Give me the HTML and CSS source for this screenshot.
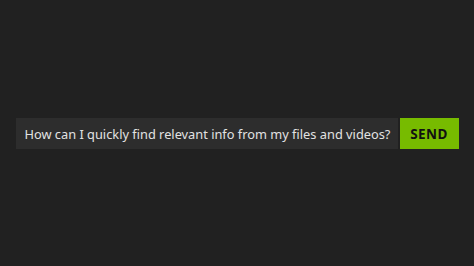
FILE: index.html
```html
<!DOCTYPE html>
<html lang="en">
<head>
<meta charset="utf-8">
<link rel="stylesheet" href="styles.css">
</head>
<body>
<div class="page">
  <form class="chat">
    <div class="field">How can I quickly find relevant info from my files and videos?</div>
    <button class="send" type="button">SEND</button>
  </form>
</div>
</body>
</html>
```

FILE: styles.css
```css
html, body {
  margin: 0;
  padding: 0;
  background: #212121;
}
.page {
  width: 474px;
  height: 266px;
  display: flex;
  align-items: flex-start;
  justify-content: center;
  padding-top: 118px;
  box-sizing: border-box;
}
.chat {
  display: flex;
  gap: 2px;
  margin: 0;
}
.field {
  width: 382px;
  height: 31px;
  box-sizing: border-box;
  padding-left: 9px;
  padding-top: 1px;
  background: #2d2d2d;
  color: #e2e2e2;
  font-family: "Noto Sans", sans-serif;
  font-size: 12.8px;
  display: flex;
  align-items: center;
  white-space: nowrap;
}
.send {
  width: 59px;
  height: 31px;
  border: 0;
  padding: 0;
  background: #77bb00;
  color: #111;
  font-family: "Noto Sans", sans-serif;
  font-weight: 700;
  font-size: 13.5px;
  letter-spacing: 0.4px;
}
```
